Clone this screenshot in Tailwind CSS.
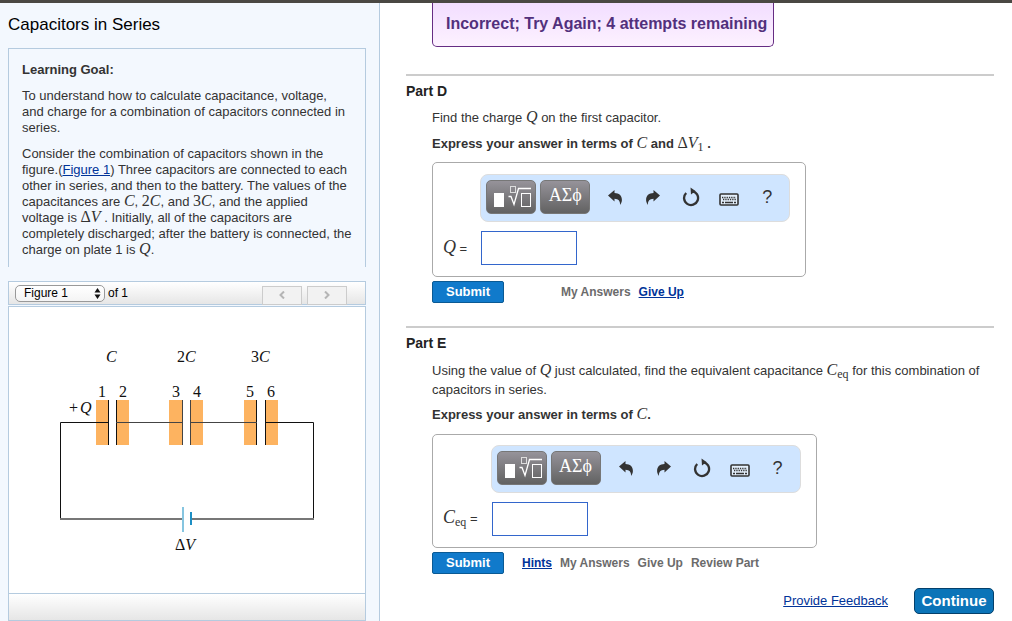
<!DOCTYPE html>
<html lang="en">
<head>
    <meta charset="UTF-8">
    <meta name="viewport" content="width=device-width, initial-scale=1.0">
    <title>Capacitors in Series</title>
    <script src="https://cdn.jsdelivr.net/npm/@tailwindcss/browser@4"></script>
</head>
<body class="min-h-screen flex flex-col bg-white border-t-3 border-[#4a4843] font-['Liberation_Sans',Arial,sans-serif] text-[13px] leading-4 text-[#333]">

<!-- Shared toolbar icons -->
<svg class="hidden">
    <symbol id="icon-root" viewBox="0 0 40 24">
        <rect x="3" y="8" width="10" height="14" fill="#fff"/>
        <rect x="19.500" y="1.500" width="5" height="6" fill="none" stroke="#ddd"/>
        <path d="M17.500 11.500h2.500l3 8 4.500-16H40" fill="none" stroke="#fff" stroke-width="1.300"/>
        <rect x="30.500" y="8.500" width="9" height="13" fill="none" stroke="#fff"/>
    </symbol>
    <symbol id="icon-undo" viewBox="0 0 14 15">
        <path d="M0 5.500 6.500 0v3c5 .2 8 3 7.300 8.200-.3 1.600-.9 2.800-1.800 3.800.3-3.400-1-6-5.500-6.200v2.700z" fill="#333"/>
    </symbol>
    <symbol id="icon-redo" viewBox="0 0 14 15">
        <path d="M14 5.500 7.500 0v3C2.500 3.200-.5 6 .2 11.200.500 12.800 1.100 14 2 15c-.3-3.400 1-6 5.500-6.200v2.700z" fill="#333"/>
    </symbol>
    <symbol id="icon-reset" viewBox="0 0 18 20">
        <path d="M10 4.100A7 7 0 1 1 4.200 6" fill="none" stroke="#333" stroke-width="2.300"/>
        <path d="M8.500 .5l5 3.500-4.500 3.500z" fill="#333"/>
    </symbol>
    <symbol id="icon-keyboard" viewBox="0 0 20 13">
        <rect x="1" y="1" width="18" height="11" rx="1" fill="#e4effb" stroke="#333" stroke-width="1.600"/>
        <path d="M3 4.500h14M4 6.500h13" stroke="#333" stroke-width="1.300" stroke-dasharray="1.300 1"/>
        <path d="M3 9.500h2M6 9.500h8M15 9.500h2" stroke="#333" stroke-width="1.300"/>
    </symbol>
</svg>

<div class="flex flex-1">

    <!-- Problem introduction and figure -->
    <aside class="w-[380px] shrink-0 flex flex-col bg-[#f3f8fe] border-r border-[#b5cbdf] pl-2 pr-[13px]">
        <h1 class="text-[17px] leading-5 text-black pt-3">Capacitors in Series</h1>

        <section class="mt-[13px] border border-b-0 border-[#b5cbdf] px-[13px] pt-[13px] pb-[9px] space-y-[10px]">
            <h2 class="font-bold">Learning Goal:</h2>
            <p>To understand how to calculate capacitance, voltage, and charge for a combination of capacitors connected in series.</p>
            <p>Consider the combination of capacitors shown in the figure.(<a href="#figure" class="text-[#003399] underline">Figure 1</a>) Three capacitors are connected to each other in series, and then to the battery. The values of the capacitances are <span class="font-['Liberation_Serif',serif] text-base leading-3"><i>C</i></span>, <span class="font-['Liberation_Serif',serif] text-base leading-3">2<i>C</i></span>, and <span class="font-['Liberation_Serif',serif] text-base leading-3">3<i>C</i></span>, and the applied voltage is <span class="font-['Liberation_Serif',serif] text-base leading-3">Δ<i>V</i></span> . Initially, all of the capacitors are completely discharged; after the battery is connected, the charge on plate 1 is <span class="font-['Liberation_Serif',serif] text-base leading-3"><i>Q</i></span>.</p>
        </section>

        <div class="mt-[14px] flex items-center border border-[#b5cbdf] bg-linear-to-b from-white to-[#e6e6e6] pl-1.5 pr-[18px] h-6 text-xs text-black">
            <div class="relative">
                <select id="figure-select" aria-label="Figure" class="block appearance-none w-[90px] h-[17px] rounded-[5px] border border-[#999] bg-linear-to-b from-white to-[#f4f4f4] pl-2 text-xs leading-[15px]">
                    <option>Figure 1</option>
                </select>
                <svg class="absolute right-1 top-[3px] w-[7px] h-[11px] pointer-events-none" viewBox="0 0 7 11"><path d="M3.500 0 6.500 4.500h-6zM3.500 11 .5 6.500h6z" fill="#111"/></svg>
            </div>
            <label for="figure-select" class="ml-[3px]">of 1</label>
            <button aria-label="Previous figure" class="ml-auto mt-1 w-10 h-[19px] border border-[#ccc] bg-[#f2f2f2] flex items-center justify-center">
                <svg class="w-[6px] h-[8px]" viewBox="0 0 6 8"><path d="M5 .5 1.500 4 5 7.500" fill="none" stroke="#b5b5b5" stroke-width="2"/></svg>
            </button>
            <button aria-label="Next figure" class="ml-[5px] mt-1 w-10 h-[19px] border border-[#ccc] bg-[#f2f2f2] flex items-center justify-center">
                <svg class="w-[6px] h-[8px]" viewBox="0 0 6 8"><path d="M1 .5 4.500 4 1 7.500" fill="none" stroke="#b5b5b5" stroke-width="2"/></svg>
            </button>
        </div>

        <figure id="figure" class="mt-px border border-[#b5cbdf] bg-white">
            <svg class="block w-[356px] h-[286px]" viewBox="9 307 356 286" font-family="Liberation Serif, serif" font-size="16" fill="#111">
                <g fill="#fdb360">
                    <rect x="96" y="400" width="13" height="45"/><rect x="116" y="400" width="13" height="45"/>
                    <rect x="169" y="400" width="13" height="45"/><rect x="190" y="400" width="13" height="45"/>
                    <rect x="244" y="400" width="13" height="45"/><rect x="265" y="400" width="13" height="45"/>
                </g>
                <g stroke="#111" fill="none">
                    <path d="M108.500 400v45M116.500 400v45M256.500 400v45M265.500 400v45"/>
                    <path d="M182.500 400v45M190.500 400v45" stroke="#444"/>
                    <path d="M60.500 519v-96.500H109M265 422.500h48.500V519"/>
                    <path d="M116 422.500h66M190 422.500h67" stroke="#444"/>
                    <path d="M60 519h123M191 519h123" stroke="#777" stroke-width="2"/>
                </g>
                <path d="M183 507v25" stroke="#86c5e0" stroke-width="2"/>
                <path d="M191 512v13" stroke="#1d8fc4" stroke-width="2"/>
                <text x="106" y="362" font-style="italic">C</text>
                <text x="177" y="362">2<tspan font-style="italic">C</tspan></text>
                <text x="251" y="362">3<tspan font-style="italic">C</tspan></text>
                <text x="98" y="397">1</text><text x="119" y="397">2</text>
                <text x="172" y="397">3</text><text x="193" y="397">4</text>
                <text x="246" y="397">5</text><text x="267" y="397">6</text>
                <text x="69" y="413">+<tspan font-style="italic" dx="2">Q</tspan></text>
                <text x="175" y="550">Δ<tspan font-style="italic">V</tspan></text>
            </svg>
            <div class="h-[27px] border-t border-[#b5cbdf] bg-linear-to-b from-white to-[#e6e6e6]"></div>
        </figure>
    </aside>

    <!-- Answer parts -->
    <main class="flex-1 min-w-0 pl-[26px] pr-[18px]">
        <div class="ml-[26px] w-fit border border-t-0 border-[#662d84] rounded-b-[5px] bg-linear-to-b from-[#f2ddff] to-[#fdf2ff] pl-[13px] pr-[6px] pt-[11px] pb-3 text-base leading-5 font-bold text-[#52307c]">Incorrect; Try Again; 4 attempts remaining</div>

        <section class="mt-[27px] border-t-2 border-[#ccc] pt-[7px]">
            <h2 class="text-sm leading-4 font-bold text-[#222]">Part D</h2>
            <div class="pl-[26px]">
                <p class="mt-[11px] leading-4">Find the charge <span class="font-['Liberation_Serif',serif] text-base leading-3"><i>Q</i></span> on the first capacitor.</p>
                <p class="mt-[10px] leading-4 font-bold">Express your answer in terms of <span class="font-['Liberation_Serif',serif] text-base leading-3 font-normal"><i>C</i></span> and <span class="font-['Liberation_Serif',serif] text-base leading-3 font-normal">Δ<i>V</i><span class="text-xs leading-3 relative top-[3px]">1</span></span> .</p>

                <div class="mt-[10px] w-fit grid grid-cols-[auto_auto] items-center rounded-[5px] border border-[#aaa] pl-[10px] pr-[15px] pt-[11px] pb-[11px]">
                    <div class="col-start-2 flex items-center h-12 w-[310px] rounded-lg border border-[#ddd] bg-[#cfe5ff] pl-[5px] pb-0.5">
                        <button aria-label="Templates" class="w-[50px] h-[34px] rounded-[5px] border border-[#777] bg-linear-to-b from-[#96939a] to-[#626262] flex items-center justify-center"><svg class="w-10 h-6 shrink-0"><use href="#icon-root"/></svg></button>
                        <button class="ml-1 w-[50px] h-[34px] rounded-[5px] border border-[#777] bg-linear-to-b from-[#96939a] to-[#626262] text-white font-['Liberation_Serif',serif] text-lg leading-5 pb-1">ΑΣϕ</button>
                        <button aria-label="Undo" class="ml-[18px]"><svg class="w-[14px] h-[15px]"><use href="#icon-undo"/></svg></button>
                        <button aria-label="Redo" class="ml-6"><svg class="w-[14px] h-[15px]"><use href="#icon-redo"/></svg></button>
                        <button aria-label="Reset" class="ml-[22px]"><svg class="w-[18px] h-5"><use href="#icon-reset"/></svg></button>
                        <button aria-label="Keyboard" class="ml-[19px] pt-1"><svg class="w-5 h-[13px]"><use href="#icon-keyboard"/></svg></button>
                        <button aria-label="Help" class="ml-[23px] text-lg leading-5">?</button>
                    </div>
                    <label for="answer-d" class="pt-1.5 pr-[13px]"><span class="font-['Liberation_Serif',serif] text-lg leading-5"><i>Q</i></span> =</label>
                    <input id="answer-d" type="text" class="mt-[9px] w-24 h-[34px] ml-px border border-[#3366cc] bg-white px-2">
                </div>

                <div class="mt-1 flex items-center text-xs leading-4 font-bold text-[#6b6b6b]">
                    <button class="w-[72px] h-[22px] rounded-xs border border-[#0a5a94] bg-[#107acb] text-[13px] leading-4 font-bold text-white">Submit</button>
                    <span class="ml-[57px]">My Answers</span>
                    <a href="#" class="ml-2 text-[#003399] underline">Give Up</a>
                </div>
            </div>
        </section>

        <section class="mt-[23px] border-t-2 border-[#ccc] pt-[7px]">
            <h2 class="text-sm leading-4 font-bold text-[#222]">Part E</h2>
            <div class="pl-[26px]">
                <p class="mt-[10px] leading-[19px]">Using the value of <span class="font-['Liberation_Serif',serif] text-base leading-3"><i>Q</i></span> just calculated, find the equivalent capacitance <span class="font-['Liberation_Serif',serif] text-base leading-3"><i>C</i><span class="text-xs leading-3 relative top-[3px]">eq</span></span> for this combination of capacitors in series.</p>
                <p class="mt-2 leading-4 font-bold">Express your answer in terms of <span class="font-['Liberation_Serif',serif] text-base leading-3 font-normal"><i>C</i></span>.</p>

                <div class="mt-[11px] w-fit grid grid-cols-[auto_auto] items-center rounded-[5px] border border-[#aaa] pl-[10px] pr-[15px] pt-[10px] pb-[11px]">
                    <div class="col-start-2 flex items-center h-12 w-[310px] rounded-lg border border-[#ddd] bg-[#cfe5ff] pl-[5px] pb-0.5">
                        <button aria-label="Templates" class="w-[50px] h-[34px] rounded-[5px] border border-[#777] bg-linear-to-b from-[#96939a] to-[#626262] flex items-center justify-center"><svg class="w-10 h-6 shrink-0"><use href="#icon-root"/></svg></button>
                        <button class="ml-1 w-[50px] h-[34px] rounded-[5px] border border-[#777] bg-linear-to-b from-[#96939a] to-[#626262] text-white font-['Liberation_Serif',serif] text-lg leading-5 pb-1">ΑΣϕ</button>
                        <button aria-label="Undo" class="ml-[18px]"><svg class="w-[14px] h-[15px]"><use href="#icon-undo"/></svg></button>
                        <button aria-label="Redo" class="ml-6"><svg class="w-[14px] h-[15px]"><use href="#icon-redo"/></svg></button>
                        <button aria-label="Reset" class="ml-[22px]"><svg class="w-[18px] h-5"><use href="#icon-reset"/></svg></button>
                        <button aria-label="Keyboard" class="ml-[19px] pt-1"><svg class="w-5 h-[13px]"><use href="#icon-keyboard"/></svg></button>
                        <button aria-label="Help" class="ml-[23px] text-lg leading-5">?</button>
                    </div>
                    <label for="answer-e" class="pt-1 pr-[13px]"><span class="font-['Liberation_Serif',serif] text-lg leading-5"><i>C</i><span class="text-xs leading-3 relative top-[3px]">eq</span></span> =</label>
                    <input id="answer-e" type="text" class="mt-[9px] w-24 h-[34px] ml-px border border-[#3366cc] bg-white px-2">
                </div>

                <div class="mt-1 flex items-center text-xs leading-4 font-bold text-[#6b6b6b]">
                    <button class="w-[72px] h-[22px] rounded-xs border border-[#0a5a94] bg-[#107acb] text-[13px] leading-4 font-bold text-white">Submit</button>
                    <a href="#" class="ml-[18px] text-[#003399] underline">Hints</a>
                    <span class="ml-2">My Answers</span>
                    <span class="ml-2">Give Up</span>
                    <span class="ml-2">Review Part</span>
                </div>
            </div>
        </section>

        <div class="mt-[14px] flex items-center justify-end gap-[26px]">
            <a href="#" class="text-[#003399] underline">Provide Feedback</a>
            <button class="w-20 h-[26px] rounded-[5px] border border-[#04406b] bg-[#0b74b8] text-[15px] leading-5 font-bold text-white">Continue</button>
        </div>
    </main>
</div>

</body>
</html>
